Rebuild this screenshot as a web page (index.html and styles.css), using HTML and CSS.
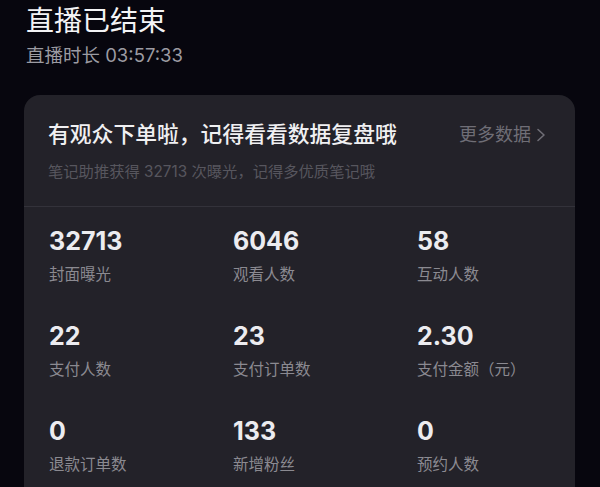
FILE: index.html
```html
<!DOCTYPE html>
<html lang="zh-CN">
<head>
<meta charset="utf-8">
<link rel="stylesheet" href="styles.css">
</head>
<body>
<div class="page">
  <header class="top">
    <h1 class="title">直播已结束</h1>
    <div class="duration">直播时长 03:57:33</div>
  </header>
  <section class="card">
    <div class="card-head">
      <div class="head-row">
        <div class="head-title">有观众下单啦，记得看看数据复盘哦</div>
        <div class="more">更多数据<svg class="chev" width="10" height="14" viewBox="0 0 10 14"><polyline points="2,1.5 8,7 2,12.5" fill="none" stroke="#6f6e76" stroke-width="1.6" stroke-linecap="round" stroke-linejoin="round"/></svg></div>
      </div>
      <div class="head-sub">笔记助推获得 32713 次曝光，记得多优质笔记哦</div>
    </div>
    <div class="stats">
      <div class="stat"><div class="num">32713</div><div class="label">封面曝光</div></div>
      <div class="stat"><div class="num">6046</div><div class="label">观看人数</div></div>
      <div class="stat"><div class="num">58</div><div class="label">互动人数</div></div>
      <div class="stat"><div class="num">22</div><div class="label">支付人数</div></div>
      <div class="stat"><div class="num">23</div><div class="label">支付订单数</div></div>
      <div class="stat"><div class="num">2.30</div><div class="label">支付金额（元）</div></div>
      <div class="stat"><div class="num">0</div><div class="label">退款订单数</div></div>
      <div class="stat"><div class="num">133</div><div class="label">新增粉丝</div></div>
      <div class="stat"><div class="num">0</div><div class="label">预约人数</div></div>
    </div>
  </section>
</div>
</body>
</html>
```

FILE: styles.css
```css
html, body {
  margin: 0;
  padding: 0;
  background: #07060e;
  height: 487px;
  overflow: hidden;
}
body {
  font-family: "Inter", "Noto Sans CJK SC", sans-serif;
  color: #efeff2;
}
.page {
  padding: 7px 25px 0 24px;
}
.top {
  padding-left: 2px;
}
.title {
  margin: 0;
  font-size: 28px;
  line-height: 28px;
  font-weight: 400;
  color: #f3f3f5;
}
.duration {
  margin-top: 11px;
  font-size: 18.5px;
  line-height: 18px;
  color: #9c9ba2;
}
.card {
  margin-top: 31px;
  background: #232229;
  border-radius: 16px;
  height: 410px;
}
.card-head {
  padding: 29px 29px 27px 24px;
  border-bottom: 1px solid #33323a;
}
.head-row {
  display: flex;
  align-items: center;
  justify-content: space-between;
}
.head-title {
  font-size: 21.8px;
  line-height: 21px;
  font-weight: 500;
  color: #f0f0f2;
}
.more {
  display: flex;
  align-items: center;
  gap: 5px;
  font-size: 18px;
  line-height: 18px;
  color: #6f6e76;
}
.chev {
  display: block;
}
.head-sub {
  margin-top: 19px;
  font-size: 15.3px;
  line-height: 15px;
  color: #57565e;
}
.stats {
  display: grid;
  grid-template-columns: 184px 184px 1fr;
  row-gap: 42px;
  padding: 22px 24px 0 25px;
}
.num {
  font-size: 25px;
  line-height: 25px;
  font-weight: 700;
  color: #ececf0;
}
.label {
  margin-top: 13px;
  font-size: 15.5px;
  line-height: 15px;
  color: #8b8a91;
}
```
